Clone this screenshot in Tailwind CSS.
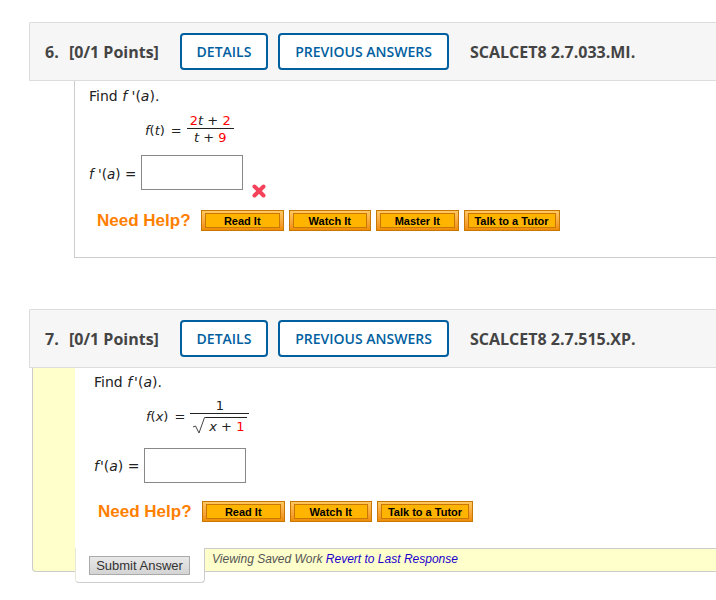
<!DOCTYPE html>
<html lang="en">
<head>
  <meta charset="UTF-8" />
  <title>SCALCET8 questions</title>
  <script src="https://cdn.jsdelivr.net/npm/@tailwindcss/browser@4"></script>
</head>
<body class="bg-white w-[716px] h-[600px] overflow-hidden font-['DejaVu_Sans',sans-serif] text-[14px] text-[#222]">

  <!-- QUESTION 6 -->
  <section class="pt-[22px] pl-[29px]">
    <div class="h-[59px] flex items-center bg-[#f6f6f6] border border-r-0 border-[#ddd] rounded-tl-[2px] pl-[15px] font-['Open_Sans',sans-serif] text-[16px] font-bold text-[#444]">
      <span class="w-[24px]">6.</span>
      <span class="w-[111px]">[0/1 Points]</span>
      <span class="w-[88px] h-[37px] flex items-center justify-center border-2 border-[#00609f] rounded-[4px] bg-white text-[14px] font-semibold text-[#00609f]">DETAILS</span>
      <span class="ml-[10px] w-[171px] h-[37px] flex items-center justify-center border-2 border-[#00609f] rounded-[4px] bg-white text-[14px] font-semibold text-[#00609f]">PREVIOUS ANSWERS</span>
      <span class="ml-[21px]">SCALCET8 2.7.033.MI.</span>
    </div>
    <div class="ml-[45px] h-[177px] border-l border-b border-[#ccc] pl-[14px] pt-[6px]">
      <p class="leading-[18px]">Find <i>f</i> '(<i>a</i>).</p>
      <div class="mt-[7px] ml-[56px] flex items-center text-[13px]">
        <span class="pt-[3px]"><i>f</i>(<i>t</i>)</span>
        <span class="ml-[6px] pt-[3px]">=</span>
        <span class="ml-[5px] w-[47px] text-center leading-[18px]">
          <span class="block border-b border-[#222] h-[17px]"><span class="text-[#f00]">2</span><i>t</i> + <span class="text-[#f00]">2</span></span>
          <span class="block h-[17px]"><i>t</i> + <span class="text-[#f00]">9</span></span>
        </span>
      </div>
      <div class="mt-[9px] flex items-start">
        <div class="flex items-center h-[35px]">
          <span class="w-[52px] pt-[3px] text-[13.5px]"><i>f</i> '(<i>a</i>) =</span>
          <span class="w-[102px] h-[35px] border border-[#888] bg-white"></span>
        </div>
        <svg class="ml-[9px] mt-[29px]" width="14" height="14" viewBox="0 0 14 14"><path d="M2.5 2.5 L11.5 11.5 M11.5 2.5 L2.5 11.5" stroke="#f4425a" stroke-width="4" stroke-linecap="round"/></svg>
      </div>
      <div class="mt-[10px] ml-[8px] flex items-center">
        <span class="w-[104px] font-['Liberation_Sans',sans-serif] font-bold text-[17px] text-[#ff7f00]">Need Help?</span>
        <div class="flex gap-[5px] font-['Liberation_Sans',sans-serif] font-bold text-[11px] text-black">
          <span class="w-[82.5px] h-[21px] p-[2px_3px] bg-linear-to-b from-[#ffc860] to-[#f08c00] border border-[#c87800] flex"><span class="flex-1 flex items-center justify-center bg-[#ffb400] border border-[#c87800]">Read It</span></span>
          <span class="w-[82.5px] h-[21px] p-[2px_3px] bg-linear-to-b from-[#ffc860] to-[#f08c00] border border-[#c87800] flex"><span class="flex-1 flex items-center justify-center bg-[#ffb400] border border-[#c87800]">Watch It</span></span>
          <span class="w-[82.5px] h-[21px] p-[2px_3px] bg-linear-to-b from-[#ffc860] to-[#f08c00] border border-[#c87800] flex"><span class="flex-1 flex items-center justify-center bg-[#ffb400] border border-[#c87800]">Master It</span></span>
          <span class="w-[96px] h-[21px] p-[2px_3px] bg-linear-to-b from-[#ffc860] to-[#f08c00] border border-[#c87800] flex"><span class="flex-1 flex items-center justify-center bg-[#ffb400] border border-[#c87800]">Talk to a Tutor</span></span>
        </div>
      </div>
    </div>
  </section>

  <!-- QUESTION 7 -->
  <section class="mt-[51px] pl-[29px]">
    <div class="h-[59px] flex items-center bg-[#f6f6f6] border border-r-0 border-[#ddd] rounded-tl-[2px] pl-[15px] font-['Open_Sans',sans-serif] text-[16px] font-bold text-[#444]">
      <span class="w-[24px]">7.</span>
      <span class="w-[111px]">[0/1 Points]</span>
      <span class="w-[88px] h-[37px] flex items-center justify-center border-2 border-[#00609f] rounded-[4px] bg-white text-[14px] font-semibold text-[#00609f]">DETAILS</span>
      <span class="ml-[10px] w-[171px] h-[37px] flex items-center justify-center border-2 border-[#00609f] rounded-[4px] bg-white text-[14px] font-semibold text-[#00609f]">PREVIOUS ANSWERS</span>
      <span class="ml-[21px]">SCALCET8 2.7.515.XP.</span>
    </div>
    <div class="ml-[3px] flex items-start">
      <div class="w-[43px] h-[204px] bg-[#ffffcc] border-l border-b border-[#ccc] rounded-bl-[4px]"></div>
      <div class="flex-1">
        <div class="h-[180px] pl-[19px] pt-[5px]">
          <p class="leading-[18px]">Find <i class="mr-[2px]">f</i>'(<i>a</i>).</p>
          <div class="mt-[7px] ml-[52px] flex items-center text-[13px]">
            <span class="pt-[2px]"><i>f</i>(<i>x</i>)</span>
            <span class="ml-[6px] pt-[2px]">=</span>
            <span class="ml-[5px] w-[59px] text-center leading-[16px]">
              <span class="block border-b border-[#222] h-[16px]">1</span>
              <span class="flex justify-center h-[19px] pt-[3px]">
                <svg width="14" height="17" viewBox="0 0 14 17"><path d="M1 10 L3.5 9 L7 16 L12.5 0.5 L14 0.5" fill="none" stroke="#444" stroke-width="1"/></svg>
                <span class="border-t border-[#222] h-[17px] leading-[18px] px-[3px]"><i>x</i> + <span class="text-[#f00]">1</span></span>
              </span>
            </span>
          </div>
          <div class="mt-[15px] flex items-center h-[35px]">
            <span class="w-[50px] pt-[1px]"><i class="mr-[1px]">f</i>'(<i>a</i>) =</span>
            <span class="w-[102px] h-[35px] border border-[#888] bg-white"></span>
          </div>
          <div class="mt-[16px] ml-[4px] flex items-center">
            <span class="w-[104px] font-['Liberation_Sans',sans-serif] font-bold text-[17px] text-[#ff7f00]">Need Help?</span>
            <div class="flex gap-[5px] font-['Liberation_Sans',sans-serif] font-bold text-[11px] text-black">
              <span class="w-[82.5px] h-[21px] p-[2px_3px] bg-linear-to-b from-[#ffc860] to-[#f08c00] border border-[#c87800] flex"><span class="flex-1 flex items-center justify-center bg-[#ffb400] border border-[#c87800]">Read It</span></span>
              <span class="w-[82.5px] h-[21px] p-[2px_3px] bg-linear-to-b from-[#ffc860] to-[#f08c00] border border-[#c87800] flex"><span class="flex-1 flex items-center justify-center bg-[#ffb400] border border-[#c87800]">Watch It</span></span>
              <span class="w-[96px] h-[21px] p-[2px_3px] bg-linear-to-b from-[#ffc860] to-[#f08c00] border border-[#c87800] flex"><span class="flex-1 flex items-center justify-center bg-[#ffb400] border border-[#c87800]">Talk to a Tutor</span></span>
            </div>
          </div>
        </div>
        <div class="flex items-start">
          <div class="w-[130px] h-[35px] bg-white border-l border-r border-b border-l-[#e8e8d8] border-[#ccc] rounded-b-[4px] pl-[13px] pt-[8px]">
            <span class="flex items-center justify-center w-[101px] h-[19px] bg-linear-to-b from-[#e8e8e8] to-[#d4d4d4] border border-[#aaa] font-['Liberation_Sans',sans-serif] text-[13px] text-[#333]">Submit Answer</span>
          </div>
          <p class="flex-1 h-[24px] pl-[7px] leading-[21px] bg-[#ffffcc] border-t border-b border-[#ccc] font-['Liberation_Sans',sans-serif] italic text-[12px] text-[#555]">Viewing Saved Work <a class="text-[#2200cc]">Revert to Last Response</a></p>
        </div>
      </div>
    </div>
  </section>

</body>
</html>
